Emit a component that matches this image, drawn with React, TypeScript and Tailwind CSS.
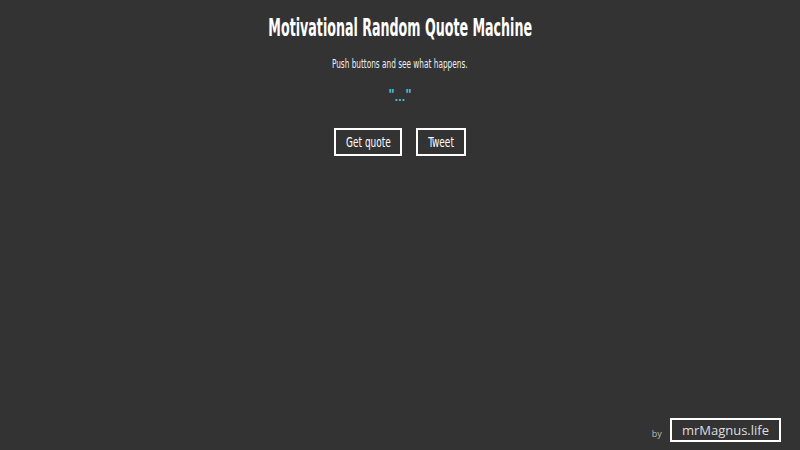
import React from "react";

// narrow display face, squeezed to get the tall condensed look
const narrow = { fontFamily: '"DejaVu Sans Condensed", "DejaVu Sans", sans-serif' };

function QuoteButton({ label, width }: { label: string; width: string }) {
  return (
    <button className={`flex h-[28px] items-center justify-center border-2 border-white text-white ${width}`}>
      <span className="inline-block scale-x-[0.71] whitespace-nowrap text-[14px] leading-[24px]">{label}</span>
    </button>
  );
}

export default function App() {
  return (
    <div className="relative h-[450px] w-[800px] overflow-hidden bg-[#333333] text-white" style={narrow}>
      <div className="flex flex-col items-center pt-[14px]">
        <h1 className="inline-block scale-x-[0.563] whitespace-nowrap text-[25px] font-bold leading-[28px]">
          Motivational Random Quote Machine
        </h1>
        <p className="mt-[15px] inline-block scale-x-[0.68] whitespace-nowrap text-[12px] leading-[14px] text-[#eeeeee]">
          Push buttons and see what happens.
        </p>
        {/* empty quote placeholder until a quote is loaded */}
        <div className="mt-[16px] flex h-[14px] items-start text-[14px] font-bold leading-[14px] text-[#4cc3e6]">
          <span>"</span>
          <span className="self-end text-[10px] leading-[6px]">...</span>
          <span>"</span>
        </div>
        <div className="mt-[27px] flex gap-[14px]">
          <QuoteButton label="Get quote" width="w-[68px]" />
          <QuoteButton label="Tweet" width="w-[50px]" />
        </div>
      </div>
      <footer
        className="absolute bottom-[8px] right-[19px] flex items-end gap-[8px]"
        style={{ fontFamily: '"Open Sans", Lato, sans-serif' }}
      >
        <span className="pb-[2px] text-[9px] leading-[12px] text-[#bbbbbb]">by</span>
        <span className="h-[24px] border-2 border-white px-[10px] text-[13px] leading-[20px] text-[#dddddd]">mrMagnus.life</span>
      </footer>
    </div>
  );
}
